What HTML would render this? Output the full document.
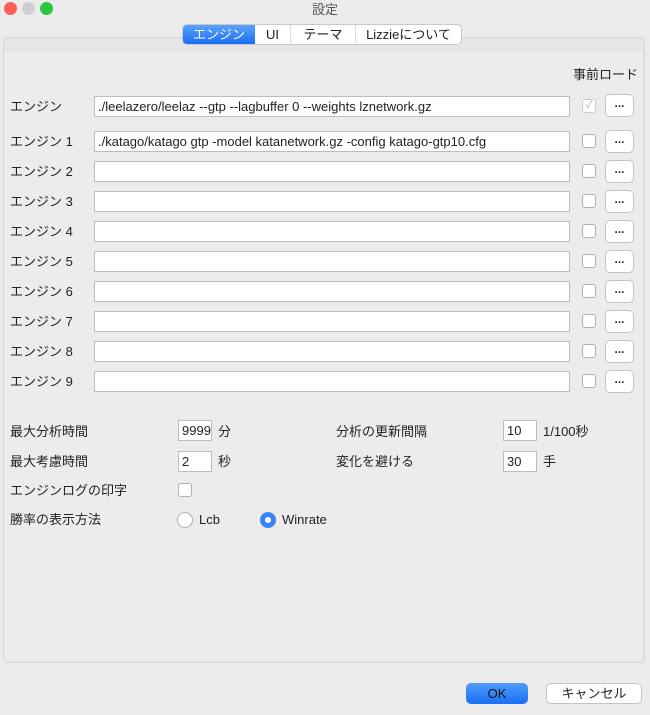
<!DOCTYPE html>
<html><head><meta charset="utf-8"><style>
*{box-sizing:border-box}
body{margin:0;width:650px;height:715px;background:#ececec;font-family:"Liberation Sans","Noto Sans CJK JP",sans-serif;font-size:13px;color:#222;position:relative;overflow:hidden}
.a{position:absolute}
.tl{position:absolute;top:2px;width:13px;height:13px;border-radius:50%}
.fld{position:absolute;background:#fff;border:1px solid #bdbdbd;height:21px;padding:2px 3px;font-size:13px;white-space:nowrap;overflow:hidden;line-height:16px}
.cb{position:absolute;width:14px;height:14px;border:1px solid #b0b0b0;border-radius:3px;background:#fff}
.btn{position:absolute;width:29px;height:23px;border:1px solid #c4c4c4;border-radius:5px;background:#fff;text-align:center;font-size:12px;line-height:17px;font-weight:bold;color:#333}
.lbl{position:absolute;font-size:13px;line-height:16px;margin-top:2px}
</style></head><body>
<div class="tl" style="left:4px;background:#fd5f57"></div>
<div class="tl" style="left:22px;background:#cfcfcf"></div>
<div class="tl" style="left:40px;background:#2ac840"></div>
<div class="a" style="left:0;width:650px;top:2px;text-align:center;color:#555;font-size:13px;line-height:16px">設定</div>
<div class="a" style="left:3px;top:37px;width:642px;height:626px;border:1px solid #d6d6d6;border-radius:4px;background:#e6e6e6"></div>
<div class="a" style="left:4px;top:52px;width:639px;height:609px;background:#ececec"></div>
<div class="a" style="left:182px;top:24px;width:280px;height:21px;border:1px solid #c8c8c8;border-radius:5px;background:#fff;display:flex;font-size:13px;line-height:19px;overflow:hidden">
<div style="width:72px;background:linear-gradient(#5aa2fb,#1a6ff5);color:#fff;text-align:center">エンジン</div>
<div style="width:36px;text-align:center;border-right:1px solid #ddd">UI</div>
<div style="width:65px;text-align:center;border-right:1px solid #ddd">テーマ</div>
<div style="flex:1;text-align:center">Lizzieについて</div></div>
<div class="lbl" style="left:573px;top:65px">事前ロード</div>

<div class="lbl" style="left:10px;top:97px">エンジン</div>
<div class="fld" style="left:94px;top:96px;width:476px">./leelazero/leelaz --gtp --lagbuffer 0 --weights lznetwork.gz</div>
<div class="cb" style="left:582px;top:99px;border-color:#ccc;color:#aaa;font-size:10px;line-height:12px;text-align:center">✓</div>
<div class="btn" style="left:605px;top:94px">...</div>

<div class="lbl" style="left:10px;top:132px">エンジン 1</div>
<div class="fld" style="left:94px;top:131px;width:476px">./katago/katago gtp -model katanetwork.gz -config katago-gtp10.cfg</div>
<div class="cb" style="left:582px;top:134px"></div><div class="btn" style="left:605px;top:130px">...</div>

<div class="lbl" style="left:10px;top:162px">エンジン 2</div><div class="fld" style="left:94px;top:161px;width:476px"></div><div class="cb" style="left:582px;top:164px"></div><div class="btn" style="left:605px;top:160px">...</div>
<div class="lbl" style="left:10px;top:192px">エンジン 3</div><div class="fld" style="left:94px;top:191px;width:476px"></div><div class="cb" style="left:582px;top:194px"></div><div class="btn" style="left:605px;top:190px">...</div>
<div class="lbl" style="left:10px;top:222px">エンジン 4</div><div class="fld" style="left:94px;top:221px;width:476px"></div><div class="cb" style="left:582px;top:224px"></div><div class="btn" style="left:605px;top:220px">...</div>
<div class="lbl" style="left:10px;top:252px">エンジン 5</div><div class="fld" style="left:94px;top:251px;width:476px"></div><div class="cb" style="left:582px;top:254px"></div><div class="btn" style="left:605px;top:250px">...</div>
<div class="lbl" style="left:10px;top:282px">エンジン 6</div><div class="fld" style="left:94px;top:281px;width:476px"></div><div class="cb" style="left:582px;top:284px"></div><div class="btn" style="left:605px;top:280px">...</div>
<div class="lbl" style="left:10px;top:312px">エンジン 7</div><div class="fld" style="left:94px;top:311px;width:476px"></div><div class="cb" style="left:582px;top:314px"></div><div class="btn" style="left:605px;top:310px">...</div>
<div class="lbl" style="left:10px;top:342px">エンジン 8</div><div class="fld" style="left:94px;top:341px;width:476px"></div><div class="cb" style="left:582px;top:344px"></div><div class="btn" style="left:605px;top:340px">...</div>
<div class="lbl" style="left:10px;top:372px">エンジン 9</div><div class="fld" style="left:94px;top:371px;width:476px"></div><div class="cb" style="left:582px;top:374px"></div><div class="btn" style="left:605px;top:370px">...</div>

<div class="lbl" style="left:10px;top:422px">最大分析時間</div>
<div class="fld" style="left:178px;top:420px;width:34px">9999</div><div class="lbl" style="left:218px;top:422px">分</div>
<div class="lbl" style="left:10px;top:452px">最大考慮時間</div>
<div class="fld" style="left:178px;top:451px;width:34px">2</div><div class="lbl" style="left:218px;top:452px">秒</div>
<div class="lbl" style="left:10px;top:481px">エンジンログの印字</div>
<div class="cb" style="left:178px;top:483px"></div>
<div class="lbl" style="left:10px;top:510px">勝率の表示方法</div>
<div class="a" style="left:177px;top:512px;width:16px;height:16px;border:1px solid #b0b0b0;border-radius:50%;background:#fff"></div>
<div class="lbl" style="left:199px;top:510px">Lcb</div>
<div class="a" style="left:260px;top:512px;width:16px;height:16px;border-radius:50%;background:#3b82f6"><div style="margin:5px;width:6px;height:6px;border-radius:50%;background:#fff"></div></div>
<div class="lbl" style="left:282px;top:510px">Winrate</div>

<div class="lbl" style="left:336px;top:422px">分析の更新間隔</div>
<div class="fld" style="left:503px;top:420px;width:34px">10</div><div class="lbl" style="left:543px;top:422px">1/100秒</div>
<div class="lbl" style="left:336px;top:452px">変化を避ける</div>
<div class="fld" style="left:503px;top:451px;width:34px">30</div><div class="lbl" style="left:543px;top:452px">手</div>

<div class="a" style="left:466px;top:683px;width:62px;height:21px;border-radius:5px;background:linear-gradient(#4f9bfb,#1a6ff5);text-align:center;line-height:21px;font-size:13px;color:#111">OK</div>
<div class="a" style="left:546px;top:683px;width:96px;height:21px;border:1px solid #c4c4c4;border-radius:5px;background:#fff;text-align:center;line-height:19px;font-size:13px">キャンセル</div>
</body></html>
